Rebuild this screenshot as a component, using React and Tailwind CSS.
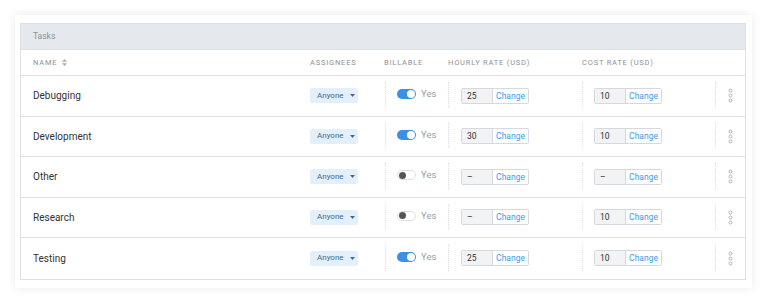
import React from 'react';

const rows = [
  { name: 'Debugging', billable: true, hourly: '25', cost: '10' },
  { name: 'Development', billable: true, hourly: '30', cost: '10' },
  { name: 'Other', billable: false, hourly: '–', cost: '–' },
  { name: 'Research', billable: false, hourly: '–', cost: '10' },
  { name: 'Testing', billable: true, hourly: '25', cost: '10' },
];

const Sep = () => <div className="self-stretch mt-[6px] mb-[8px] border-l border-dotted border-[#d9dde2]" />;

const Toggle = ({ on }) =>
  on ? (
    <div className="w-[19px] h-[10px] rounded-full bg-[#3b8fe4] flex items-center justify-end pr-[1px]">
      <div className="w-[8px] h-[8px] rounded-full bg-white" />
    </div>
  ) : (
    <div className="w-[19px] h-[10px] rounded-full bg-white border border-[#dcdfe3] flex items-center pl-[1px]">
      <div className="w-[7px] h-[7px] rounded-full bg-[#555]" />
    </div>
  );

const RateInput = ({ value }) => (
  <div className="inline-flex h-[16px] border border-[#d5d9de] rounded-[2px] text-[8.5px] leading-none align-middle">
    <div className="w-[31px] bg-[#f1f3f5] border-r border-[#d5d9de] flex items-center pl-[5px] text-[#333]">{value}</div>
    <div className="w-[35px] bg-white flex items-center justify-center text-[#3d9be9]">Change</div>
  </div>
);

const Dots = () => (
  <svg width="5" height="15" viewBox="0 0 5 15">
    {[2.5, 7.5, 12.5].map((cy) => (
      <circle key={cy} cx="2.5" cy={cy} r="1.5" fill="none" stroke="#aaa" strokeWidth="0.9" />
    ))}
  </svg>
);

export default function App() {
  return (
    <div className="w-[768px] h-[304px] bg-white pt-[15px] pl-[15px]" style={{ fontFamily: 'Roboto, "Liberation Sans", sans-serif' }}>
      <div className="w-[737px] h-[273px] bg-white shadow-[0_0_9px_rgba(0,0,0,0.09)] pt-[8px] pl-[5px]">
        <div className="w-[726px] border border-[#dde1e6]">
          <div className="h-[26px] bg-[#e5e9ee] border-b border-[#dde1e6] flex items-center pl-[12px] text-[8.5px] text-[#8c9197]">
            Tasks
          </div>
          <div className="h-[26px] flex items-center border-b border-[#dde1e6] text-[7.5px] tracking-[0.8px] text-[#8d9196]">
            <div className="w-[277px] pl-[12px] flex items-center gap-[5px]">
              NAME
              <svg width="5" height="7" viewBox="0 0 5 7">
                <path d="M2.5 0L5 2.8H0z M2.5 7L0 4.2H5z" fill="#aaa" />
              </svg>
            </div>
            <div className="w-[86px] pl-[12px]">ASSIGNEES</div>
            <div className="w-[64px]">BILLABLE</div>
            <div className="w-[134px]">HOURLY RATE (USD)</div>
            <div className="w-[133px]">COST RATE (USD)</div>
          </div>
          {rows.map((r, i) => (
            <div key={r.name} className={`h-[40.5px] flex items-center ${i < rows.length - 1 ? 'border-b border-[#dde1e6]' : ''}`}>
              <div className="w-[277px] pl-[12px] text-[10px] text-[#333]">{r.name}</div>
              <div className="w-[87px] pl-[12px]">
                <div className="w-[48px] h-[15px] bg-[#e3f0fb] rounded-[2px] flex items-center pl-[7px] gap-[6px] text-[8px] text-[#3e6a92]">
                  Anyone
                  <svg width="5" height="3" viewBox="0 0 5 3">
                    <path d="M0 0H5L2.5 3z" fill="#3e6a92" />
                  </svg>
                </div>
              </div>
              <Sep />
              <div className="w-[62px] pl-[11px] flex items-center gap-[5px] -mt-[3px]">
                <Toggle on={r.billable} />
                <span className="text-[9.5px] text-[#9a9ea3]">Yes</span>
              </div>
              <Sep />
              <div className="w-[133px] pl-[12px] flex">
                <RateInput value={r.hourly} />
              </div>
              <Sep />
              <div className="w-[132px] pl-[11px] flex">
                <RateInput value={r.cost} />
              </div>
              <Sep />
              <div className="flex-1 flex justify-center pr-[1px]">
                <Dots />
              </div>
            </div>
          ))}
        </div>
      </div>
    </div>
  );
}
